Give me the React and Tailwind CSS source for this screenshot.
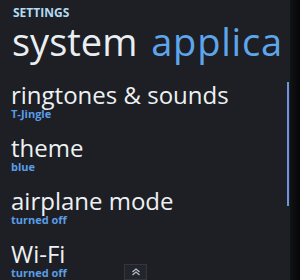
const items = [
  { title: "ringtones & sounds", sub: "T-Jingle" },
  { title: "theme", sub: "blue" },
  { title: "airplane mode", sub: "turned off" },
  { title: "Wi-Fi", sub: "turned off" },
];

export default function App() {
  return (
    <div
      className="relative flex h-[280px] w-[300px] overflow-hidden bg-[#1d1f25]"
      style={{ fontFamily: '"Open Sans", "Noto Sans", sans-serif' }}
    >
      <div className="relative flex-1 overflow-hidden pl-[11px]">
        <div className="mt-[6px] pl-[2px] text-[12px] font-bold leading-[14px] text-[#b3dbf2]">
          SETTINGS
        </div>
        <div className="whitespace-nowrap pl-[1px] text-[38px] leading-[42px] text-[#e9eef2]">
          system <span className="ml-[4px] tracking-[0.8px] text-[#5ea6ec]">applica</span>
        </div>
        <div className="mt-[19px] flex flex-col">
          {items.map((it) => (
            <div key={it.title} className="h-[53px]">
              <div className="whitespace-nowrap text-[24px] leading-[27px] text-[#edf1f3]">
                {it.title}
              </div>
              <div className="text-[11px] font-bold leading-[12px] text-[#5b9ce6]">
                {it.sub}
              </div>
            </div>
          ))}
        </div>
        <div className="absolute right-[1px] top-[82px] h-[124px] w-[2px] bg-[#6f93e0]" />
        <div className="absolute bottom-[0px] left-[124px] flex h-[16px] w-[23px] items-center justify-center border border-[#34363e] bg-[#23252c]">
          <svg width="10" height="8" viewBox="0 0 10 8" fill="none" stroke="#b9bcc4" strokeWidth="1.3">
            <path d="M1.5 4 L5 1 L8.5 4" />
            <path d="M1.5 7 L5 4 L8.5 7" />
          </svg>
        </div>
      </div>
      <div className="h-full w-[10px] bg-gradient-to-r from-[#111215] to-[#070708]" />
    </div>
  );
}
